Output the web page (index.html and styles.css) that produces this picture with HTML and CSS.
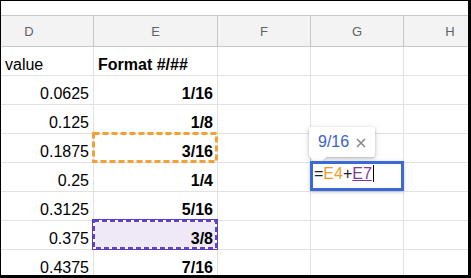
FILE: index.html
```html
<!DOCTYPE html>
<html lang='en'>
<head>
    <meta charset='UTF-8'>
    <meta name='viewport' content='width=device-width, initial-scale=1.0'>
    <title>Fraction format</title>
    <link rel="stylesheet" href="styles.css">
</head>
<body>
    <div class='frame'>
        <div class='strip'></div>
        <div class='sheet'>
            <div class='hd hd-d'>D</div>
            <div class='hd'>E</div>
            <div class='hd'>F</div>
            <div class='hd'>G</div>
            <div class='hd'>H</div>

            <div class='c'>value</div>
            <div class='c b'>Format #/##</div>
            <div class='c'></div><div class='c'></div><div class='c'></div>

            <div class='c num'>0.0625</div>
            <div class='c num b'>1/16</div>
            <div class='c'></div><div class='c'></div><div class='c'></div>

            <div class='c num'>0.125</div>
            <div class='c num b'>1/8</div>
            <div class='c'></div><div class='c'></div><div class='c'></div>

            <div class='c num'>0.1875</div>
            <div class='c num b pin'>3/16
                <svg class='ref' width='126' height='31'>
                    <rect x='1.5' y='1.5' width='123' height='28' fill='none' stroke='#f4a035' stroke-width='3' stroke-dasharray='6 3'/>
                </svg>
            </div>
            <div class='c'></div><div class='c'></div><div class='c'></div>

            <div class='c num'>0.25</div>
            <div class='c num b'>1/4</div>
            <div class='c'></div>
            <div class='c pin'>
                <div class='hint'>
                    <span class='hint-val'>9/16</span>
                    <svg class='hint-x' width='10' height='10'>
                        <path d='M1 1L9 9M9 1L1 9' stroke='#8a8a8a' stroke-width='1.6' fill='none'/>
                    </svg>
                </div>
                <div class='editor'>=<span class='f-e4'>E4</span>+<span class='f-e7'>E7</span><span class='caret'></span></div>
            </div>
            <div class='c'></div>

            <div class='c num'>0.3125</div>
            <div class='c num b'>5/16</div>
            <div class='c'></div><div class='c'></div><div class='c'></div>

            <div class='c num'>0.375</div>
            <div class='c num b pin e7'>3/8
                <svg class='ref' width='126' height='31'>
                    <rect x='0.5' y='0.5' width='125' height='30' fill='none' stroke='#4b3fcf' stroke-width='1'/>
                    <rect x='2' y='2' width='122' height='27' fill='none' stroke='#fff' stroke-width='2'/>
                    <rect x='2' y='2' width='122' height='27' fill='none' stroke='#6a3fc0' stroke-width='2' stroke-dasharray='5 3'/>
                </svg>
            </div>
            <div class='c'></div><div class='c'></div><div class='c'></div>

            <div class='c num'>0.4375</div>
            <div class='c num b'>7/16</div>
            <div class='c'></div><div class='c'></div><div class='c'></div>
        </div>
    </div>
</body>
</html>
```

FILE: styles.css
```css
body { margin: 0; padding: 0; background: #000; font-family: "Liberation Sans", Arial, sans-serif; }
.frame { width: 471px; height: 278px; box-sizing: border-box; border: solid #000; border-width: 1px 3px 3px 1px; background: #fff; overflow: hidden; }
.strip { height: 14px; border-bottom: 1px solid #c7c7c7; }
.sheet { display: grid; grid-template-columns: 93px 124px 93px 93px 93px; grid-template-rows: 31px repeat(8, 29px); }
.hd { display: flex; align-items: center; justify-content: center; padding-top: 1px; background: #f3f3f3; border-right: 1px solid #c7c7c7; border-bottom: 1px solid #c7c7c7; color: #5f6368; font-size: 13px; }
.hd-d { padding-right: 36px; }
.c { display: flex; align-items: flex-end; padding: 0 4px 1px; border-right: 1px solid #e2e2e2; border-bottom: 1px solid #e2e2e2; font-size: 16px; line-height: 18px; color: #000; white-space: nowrap; }
.num { justify-content: flex-end; }
.b { font-weight: bold; }
.pin { position: relative; }
.e7 { background: #efe8f6; }
.ref { position: absolute; left: -2px; top: -2px; }
.editor { position: absolute; left: -1px; top: -2px; z-index: 2; width: 94px; height: 30px; box-sizing: border-box; padding: 1px 0 0 1px; border: 3px solid #3b6ad8; background: #fff; box-shadow: 0 1px 4px rgba(0, 0, 0, 0.2); color: #222; font-size: 16px; line-height: 18px; white-space: nowrap; }
.f-e4 { color: #f29a2b; }
.f-e7 { color: #7b3a9f; text-decoration: underline; }
.caret { display: inline-block; width: 1px; height: 17px; margin-left: 1px; vertical-align: -3px; background: #000; }
.hint { position: absolute; left: -2px; top: -36px; z-index: 1; width: 66px; height: 30px; box-sizing: border-box; display: flex; align-items: center; padding-left: 9px; background: #fff; border-radius: 2px; box-shadow: 0 1px 3px rgba(0, 0, 0, 0.25), 0 2px 8px rgba(0, 0, 0, 0.1); }
.hint::after { content: ''; position: absolute; left: 3px; bottom: -6px; width: 12px; height: 12px; background: #fff; transform: rotate(45deg); box-shadow: 1px 1px 2px rgba(0, 0, 0, 0.12); }
.hint-val { position: relative; z-index: 1; color: #3a62cc; font-size: 16px; line-height: 18px; }
.hint-x { margin: 1px 0 0 7px; }
```
